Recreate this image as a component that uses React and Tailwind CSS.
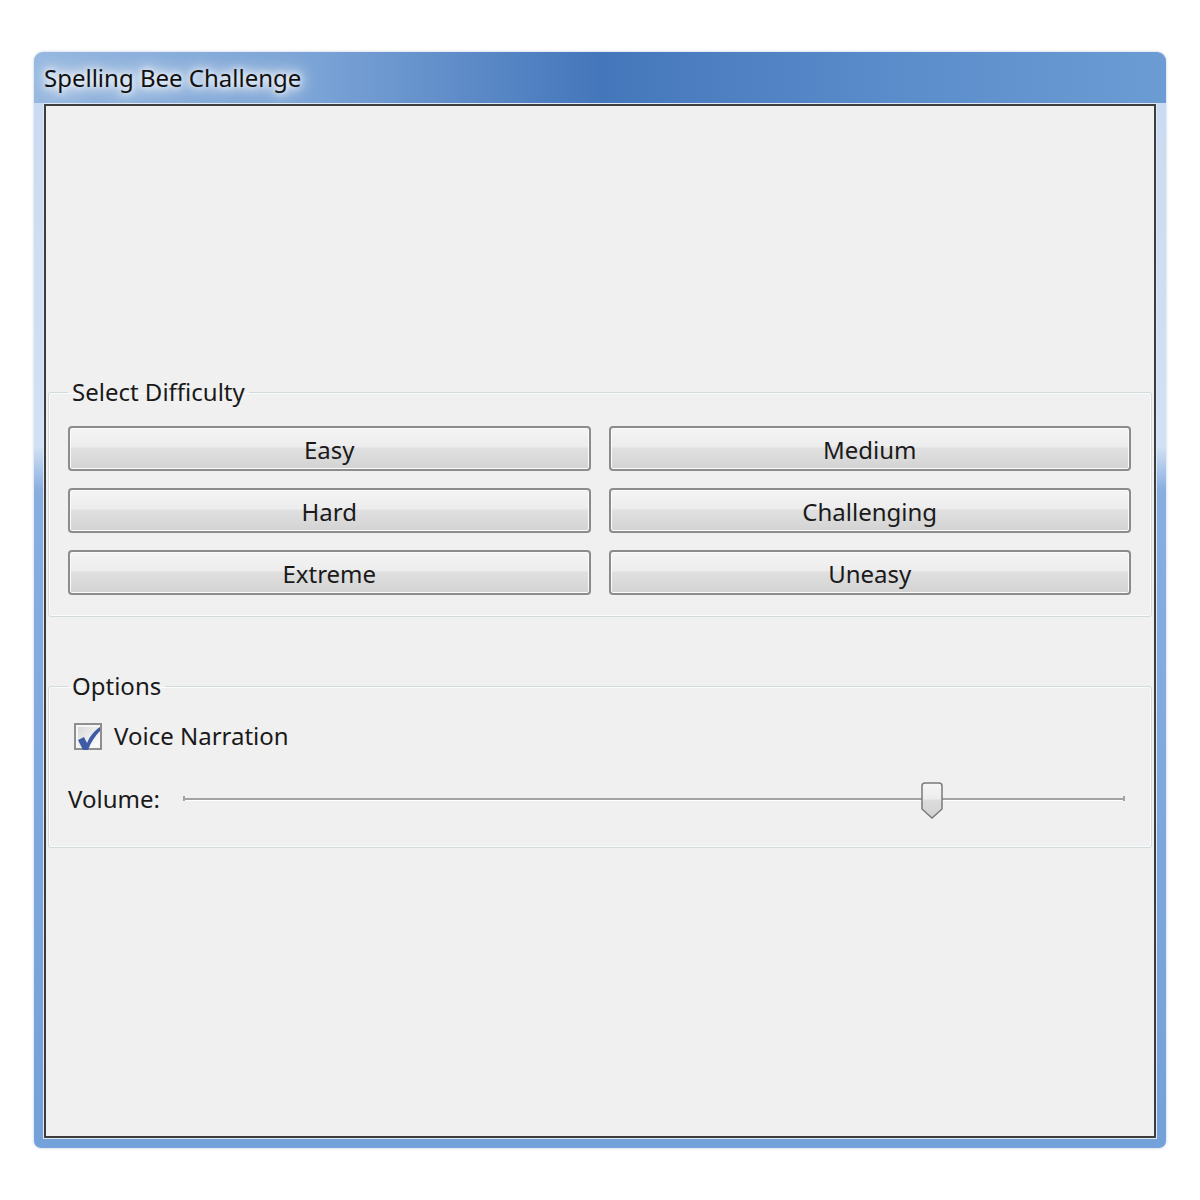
import React from "react";

const font = "font-['Noto_Sans','Open_Sans',sans-serif]";

function Btn({ children }) {
  return (
    <button className="h-[45px] rounded-[4px] border-2 border-[#8c8c8c] bg-[linear-gradient(to_bottom,#f4f4f4_0%,#ededed_45%,#e0e0e0_50%,#d3d3d3_100%)] shadow-[inset_0_0_0_1px_#fbfbfb] text-[24px] text-[#1a1a1a] leading-none flex items-center justify-center pt-[2px]">
      {children}
    </button>
  );
}

export default function App() {
  return (
    <div className={`w-[1200px] h-[1200px] bg-white pt-[52px] pl-[34px] ${font}`}>
      <div className="w-[1132px] h-[1096px] rounded-t-[9px] rounded-b-[7px] overflow-hidden flex flex-col shadow-[0_0_3px_rgba(120,150,190,0.5)] bg-[linear-gradient(to_bottom,#c9dbf1_0%,#d2e1f4_36%,#88aee0_40%,#74a1d9_100%)]">
        {/* title bar */}
        <div className="h-[51px] shrink-0 flex items-center pl-[10px] bg-[linear-gradient(to_right,#96b8e0_0%,#7aa3d6_25%,#4476bb_50%,#5a8ccb_75%,#6c9cd3_100%)]">
          <span className="text-[24px] text-[#111] leading-none mt-[1px] [text-shadow:0_0_6px_#fff,0_0_12px_#fff,0_0_18px_#fff,0_0_26px_#f4f8fd]">
            Spelling Bee Challenge
          </span>
        </div>
        {/* body */}
        <div className="flex-1 flex flex-col pl-[9px] pr-[9px] pb-[9px]">
          <div className="flex-1 border border-[#dfe9f5]">
            <div className="h-full border-2 border-[#3d3d3d] bg-[#f0f0f0] flex flex-col px-[2px]">
              <div className="h-[271px] shrink-0" />
              {/* Select Difficulty */}
              <fieldset className="border border-[#d3dadd] rounded-[3px] shadow-[inset_0_0_0_1px_#fbfbfb] pl-[19px] pr-[20px] pt-[19px] pb-[21px]">
                <legend className="px-[4px] text-[24px] leading-[30px] text-[#1a1a1a]">Select Difficulty</legend>
                <div className="grid grid-cols-2 gap-x-[18px] gap-y-[17px]">
                  <Btn>Easy</Btn>
                  <Btn>Medium</Btn>
                  <Btn>Hard</Btn>
                  <Btn>Challenging</Btn>
                  <Btn>Extreme</Btn>
                  <Btn>Uneasy</Btn>
                </div>
              </fieldset>
              {/* Options */}
              <fieldset className="mt-[54px] border border-[#d3dadd] rounded-[3px] shadow-[inset_0_0_0_1px_#fbfbfb] pl-[19px] pr-[26px] pt-[20px] pb-[30px]">
                <legend className="px-[4px] text-[24px] leading-[30px] text-[#1a1a1a]">Options</legend>
                <div className="flex items-center h-[30px] pl-[6px]">
                  <div className="relative w-[28px] h-[27px] border-2 border-[#8e8e8e] bg-[linear-gradient(135deg,#d4d4d4_0%,#f0f0f0_60%,#ffffff_100%)] shadow-[inset_0_0_0_2px_#f6f6f6]">
                    <svg className="absolute left-[0px] top-[1px]" width="26" height="26" viewBox="0 0 26 26">
                      <path d="M2 14 L8 11 L11 17 C14 10 18 5 24 1 L24 5 C19 10 15 16 12 24 L7 24 Z" fill="#3e5ca6" />
                    </svg>
                  </div>
                  <span className="ml-[12px] text-[24px] leading-none text-[#1a1a1a]">Voice Narration</span>
                </div>
                <div className="flex items-center h-[36px] mt-[30px]">
                  <span className="text-[24px] leading-none text-[#1a1a1a] w-[115px] shrink-0">Volume:</span>
                  <div className="relative flex-1 h-[36px]">
                    <div className="absolute left-0 right-0 top-[17px] h-[3px] border-t-2 border-[#a3a3a3] border-b border-b-white" />
                    <div className="absolute left-0 top-[15px] w-[2px] h-[5px] bg-[#a3a3a3]" />
                    <div className="absolute right-0 top-[15px] w-[2px] h-[5px] bg-[#a3a3a3]" />
                    <svg className="absolute left-[738px] top-[1px]" width="22" height="38" viewBox="0 0 22 38">
                      <defs>
                        <linearGradient id="hg" x1="0" y1="0" x2="0" y2="1">
                          <stop offset="0" stopColor="#f7f7f7" />
                          <stop offset="0.45" stopColor="#ececec" />
                          <stop offset="0.5" stopColor="#dcdcdc" />
                          <stop offset="1" stopColor="#d2d2d2" />
                        </linearGradient>
                      </defs>
                      <path d="M4 1 H18 Q21 1 21 4 V27 L11 36 L1 27 V4 Q1 1 4 1 Z" fill="url(#hg)" stroke="#7a7a7a" strokeWidth="1.5" />
                    </svg>
                  </div>
                </div>
              </fieldset>
            </div>
          </div>
        </div>
      </div>
    </div>
  );
}
